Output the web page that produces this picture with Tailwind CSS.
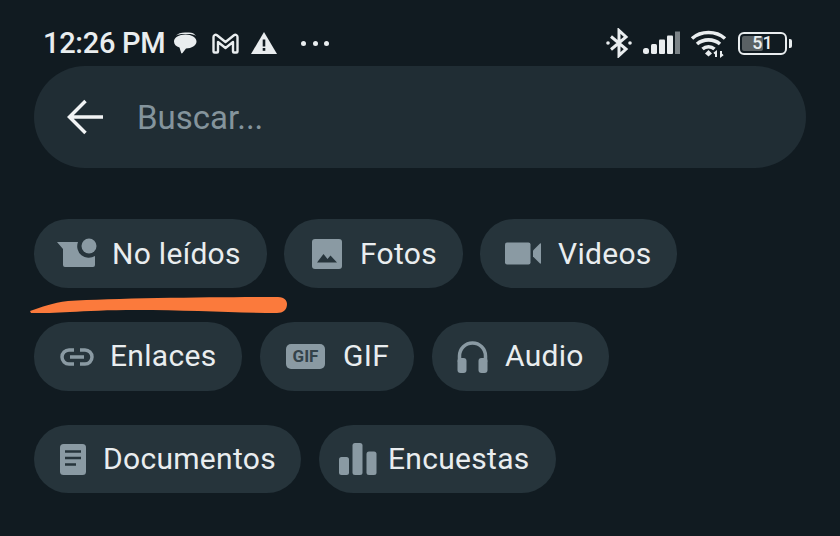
<!DOCTYPE html>
<html lang="es">
<head>
  <meta charset="UTF-8" />
  <title>Buscar</title>
  <script src="https://cdn.jsdelivr.net/npm/@tailwindcss/browser@4"></script>
</head>
<body class="bg-[#111b21] font-['Roboto',sans-serif] w-[840px] h-[536px] overflow-hidden relative">

  <!-- status bar -->
  <div class="h-[66px] flex items-center justify-between pl-[43px] pr-[48px] pt-[20px] text-[#e9edef]">
    <div class="flex items-center">
      <span class="text-[29px] leading-none font-medium tracking-[-0.3px] w-[131px]">12:26 PM</span>
      <svg class="w-[24px] h-[22px] ml-[-1px]" viewBox="0 0 24 22" fill="#e9edef">
        <path d="M3 3.500C5 1.500 8 .5 12 .5h4c3 0 5.500 1 7 3.500C21 2.500 18.500 2 15 2H10C7.500 2 5 2.500 3 3.500z"/>
        <path d="M12.500 2.500C18.500 2.500 23.500 5.500 23.500 9.500S18.500 16.500 13 16.500L9.500 21c-.5.500-1 .5-1.300 0L6.500 15.500C3 14.500 1 12.500 1 9.500 1 5.500 6 2.500 12.500 2.500z"/>
      </svg>
      <svg class="w-[27px] h-[21px] ml-[15px]" viewBox="0 0 27 21" fill="none" stroke="#e9edef" stroke-width="2.400" stroke-linejoin="round">
        <path d="M1.500 18.500V4c0-2 2-2.800 3.500-1.700L13.500 9l8.500-6.700C23.500 1.200 25.500 2 25.500 4v14.500c0 .5-.5 1-1 1h-2.500c-.5 0-1-.5-1-1V9l-7.500 6L6 9v9.500c0 .5-.5 1-1 1H2.500c-.5 0-1-.5-1-1z"/>
      </svg>
      <svg class="w-[26px] h-[22px] ml-[12px]" viewBox="0 0 26 22">
        <path d="M13 0 26 22H0z" fill="#e9edef"/>
        <rect x="11.700" y="7.500" width="2.600" height="7" fill="#111b21"/>
        <rect x="11.700" y="16" width="2.600" height="2.800" fill="#111b21"/>
      </svg>
      <div class="flex gap-[6.500px] ml-[24px]">
        <span class="w-[5px] h-[5px] rounded-full bg-[#e9edef]"></span>
        <span class="w-[5px] h-[5px] rounded-full bg-[#e9edef]"></span>
        <span class="w-[5px] h-[5px] rounded-full bg-[#e9edef]"></span>
      </div>
    </div>
    <div class="flex items-center">
      <svg class="w-[28px] h-[30px]" viewBox="0 0 28 30" fill="none" stroke="#e9edef" stroke-width="3">
        <path d="M6 8.500 21 21l-7 6.500V2.500L21 9 6 21.500"/>
        <circle cx="3" cy="15" r="1.800" fill="#e9edef" stroke="none"/>
        <circle cx="25" cy="15" r="1.800" fill="#e9edef" stroke="none"/>
      </svg>
      <svg class="w-[37px] h-[24px] ml-[10px]" viewBox="0 0 37 24" fill="#e9edef">
        <rect x="0" y="17" width="6" height="6" rx="2.500"/>
        <rect x="8" y="13" width="6" height="10" rx="1.500"/>
        <rect x="16" y="8.500" width="6" height="14.500" rx="1"/>
        <rect x="24" y="4.500" width="6" height="18.500" rx="1"/>
        <rect x="32" y="0.500" width="5" height="22.500" fill="#7b8387"/>
      </svg>
      <svg class="w-[38px] h-[30px] ml-[10px]" viewBox="0 0 38 30" fill="none" stroke="#e9edef" stroke-width="3.600">
        <path d="M2 10.500C11 2.500 26 2.500 35 10.500"/>
        <path d="M7 16c6.500-5.500 16.500-5.500 23 0"/>
        <path d="M12.500 21c3.500-3 8.500-3 12 0"/>
        <path d="M15 25.500 18.500 22 22 25.500 18.500 28.500z" fill="#e9edef" stroke="none"/>
        <path d="M26 29v-5l-2 1.500M31 23v5l2-1.500" stroke-width="2"/>
      </svg>
      <div class="flex items-center ml-[10px]">
        <div class="w-[49px] h-[23px] rounded-[6px] border-[2.500px] border-[#e9edef] p-[2px] relative">
          <div class="w-[51%] h-full bg-[#5a6164] rounded-[2px]"></div>
          <span class="absolute inset-0 flex items-center justify-center text-[18px] leading-none font-medium text-[#e9edef]">51</span>
        </div>
        <div class="w-[3px] h-[9px] ml-[2px] bg-[#e9edef] rounded-r-[2px]"></div>
      </div>
    </div>
  </div>

  <main class="pl-[34px]">
    <!-- search -->
    <div class="w-[772px] h-[102px] rounded-[51px] bg-[#202d34] flex items-center pl-[33px]">
      <svg class="w-[36px] h-[36px]" viewBox="0 0 36 36" fill="none" stroke="#f1f3f4" stroke-width="3.500">
        <path d="M18.500 2 2.500 18l16 16M3 18h33"/>
      </svg>
      <span class="ml-[34px] text-[33px] leading-none text-[#84949c]">Buscar...</span>
    </div>

    <!-- filters -->
    <div class="mt-[51px] flex flex-col gap-[34px]">
      <div class="flex gap-[17px]">
        <div class="w-[233px] h-[69px] rounded-[34px] bg-[#26343b] flex items-center pl-[23px] gap-[15px] text-[30px] tracking-[0.3px] text-[#e9edef]">
          <svg class="w-[40px] h-[31px] shrink-0" viewBox="0 0 40 31" fill="#8a9aa3">
            <path d="M0 4H21A11.600 11.600 0 0 0 38 18V27a2 2 0 0 1-2 2H8a2 2 0 0 1-2-2V11Z"/>
            <circle cx="32" cy="8" r="7.500"/>
          </svg>
          <span>No leídos</span>
        </div>
        <div class="w-[179px] h-[69px] rounded-[34px] bg-[#26343b] flex items-center pl-[28px] gap-[18px] text-[30px] tracking-[0.3px] text-[#e9edef]">
          <svg class="w-[30px] h-[30px] shrink-0" viewBox="0 0 30 30">
            <rect width="30" height="30" rx="3" fill="#8a9aa3"/>
            <path d="M5 23.500 11.500 15l4 5 3-3.500 6.500 7z" fill="#26343b"/>
          </svg>
          <span>Fotos</span>
        </div>
        <div class="w-[197px] h-[69px] rounded-[34px] bg-[#26343b] flex items-center pl-[25px] gap-[17px] text-[30px] tracking-[0.3px] text-[#e9edef]">
          <svg class="w-[36px] h-[23px] shrink-0" viewBox="0 0 36 23" fill="#8a9aa3">
            <rect width="25.500" height="22" y="0.500" rx="2"/>
            <path d="M28 8.500 35 1.500c.5-.3 1-.2 1 .5v19c0 .7-.5.8-1 .5l-7-7z"/>
          </svg>
          <span>Videos</span>
        </div>
      </div>

      <div class="flex gap-[18px]">
        <div class="w-[208px] h-[69px] rounded-[34px] bg-[#26343b] flex items-center pl-[26px] gap-[16px] text-[30px] tracking-[0.3px] text-[#e9edef]">
          <svg class="w-[34px] h-[18px] shrink-0" viewBox="0 0 34 18" fill="none" stroke="#8a9aa3" stroke-width="3.500">
            <path d="M14 2H9a7 7 0 0 0 0 14h5M20 2h5a7 7 0 0 1 0 14h-5M10 9h14"/>
          </svg>
          <span class="pb-[2px]">Enlaces</span>
        </div>
        <div class="w-[154px] h-[69px] rounded-[34px] bg-[#26343b] flex items-center pl-[26px] gap-[18px] text-[30px] tracking-[0.3px] text-[#e9edef]">
          <div class="w-[39px] h-[25px] shrink-0 rounded-[5px] bg-[#8a9aa3] flex items-center justify-center text-[17px] leading-none tracking-normal font-bold text-[#33424a]">GIF</div>
          <span class="pb-[2px]">GIF</span>
        </div>
        <div class="w-[177px] h-[69px] rounded-[34px] bg-[#26343b] flex items-center pl-[25px] gap-[17px] text-[30px] tracking-[0.3px] text-[#e9edef]">
          <svg class="w-[31px] h-[33px] shrink-0" viewBox="0 0 31 33" fill="none">
            <path d="M2.500 22V16a13 13 0 0 1 26 0v6" stroke="#8a9aa3" stroke-width="3.500"/>
            <rect x="0.500" y="18" width="9" height="15" rx="3" fill="#8a9aa3"/>
            <rect x="21.500" y="18" width="9" height="15" rx="3" fill="#8a9aa3"/>
          </svg>
          <span class="pb-[2px]">Audio</span>
        </div>
      </div>

      <div class="flex gap-[18px]">
        <div class="w-[267px] h-[68px] rounded-[34px] bg-[#26343b] flex items-center pl-[26px] gap-[17px] text-[30px] tracking-[0.3px] text-[#e9edef]">
          <svg class="w-[26px] h-[31px] shrink-0" viewBox="0 0 26 31">
            <rect width="26" height="31" rx="3.500" fill="#8a9aa3"/>
            <path d="M5 7.500h16M5 14h16M5 20.500h11" stroke="#26343b" stroke-width="2.500"/>
          </svg>
          <span class="pb-[2px]">Documentos</span>
        </div>
        <div class="w-[237px] h-[68px] rounded-[34px] bg-[#26343b] flex items-center pl-[20px] gap-[11px] text-[30px] tracking-[0.3px] text-[#e9edef]">
          <svg class="w-[38px] h-[32px] shrink-0" viewBox="0 0 38 32" fill="#8a9aa3">
            <rect y="14" width="10" height="18" rx="2.500"/>
            <rect x="13.500" y="0" width="10" height="32" rx="2.500"/>
            <rect x="27.500" y="8.500" width="10" height="23.500" rx="2.500"/>
          </svg>
          <span class="pb-[2px]">Encuestas</span>
        </div>
      </div>
    </div>
  </main>

  <!-- orange marker stroke drawn on top of the screenshot -->
  <svg class="absolute left-[28px] top-[294px] w-[262px] h-[24px]" viewBox="0 0 262 24">
    <path d="M2 17C14 13 24 9 40 7 90 4 200 3 250 3c7 0 9 4 9 7 0 6-4 9-10 9-40 0-90-3-140-3-30 0-50 1-67 2-14 1-28 1-39 1z" fill="#fb7a3c"/>
  </svg>
</body>
</html>
